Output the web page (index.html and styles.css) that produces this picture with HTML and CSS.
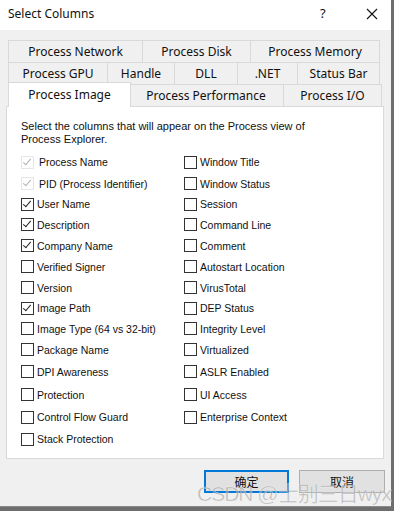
FILE: index.html
```html
<!DOCTYPE html>
<html>
<head>
<meta charset="utf-8">
<link rel="stylesheet" href="styles.css">
</head>
<body>
<div class="dialog">
  <div class="titlebar">
    <span class="title">Select Columns</span>
    <span class="help">?</span>
    <span class="close"><svg width="12" height="12" viewBox="0 0 12 12"><path d="M1 1L11 11M11 1L1 11" stroke="#111" stroke-width="1.1" fill="none"/></svg></span>
  </div>
  <div class="tabs">
    <div class="tabrow">
      <div class="tab w134">Process Network</div>
      <div class="tab w108">Process Disk</div>
      <div class="tab w130">Process Memory</div>
    </div>
    <div class="tabrow">
      <div class="tab w99">Process GPU</div>
      <div class="tab w67">Handle</div>
      <div class="tab w63">DLL</div>
      <div class="tab w60">.NET</div>
      <div class="tab w83">Status Bar</div>
    </div>
    <div class="tabrow">
      <div class="tab w118 selected">Process Image</div>
      <div class="tab w156">Process Performance</div>
      <div class="tab w98">Process I/O</div>
    </div>
  </div>
  <div class="panel">
    <p class="intro">Select the columns that will appear on the Process view of<br>Process Explorer.</p>
    <div class="grid">
      <label class="item disabled"><span class="box checked"></span>Process Name</label>
      <label class="item"><span class="box"></span>Window Title</label>
      <label class="item disabled"><span class="box checked"></span>PID (Process Identifier)</label>
      <label class="item"><span class="box"></span>Window Status</label>
      <label class="item"><span class="box checked"></span>User Name</label>
      <label class="item"><span class="box"></span>Session</label>
      <label class="item"><span class="box checked"></span>Description</label>
      <label class="item"><span class="box"></span>Command Line</label>
      <label class="item"><span class="box checked"></span>Company Name</label>
      <label class="item"><span class="box"></span>Comment</label>
      <label class="item"><span class="box"></span>Verified Signer</label>
      <label class="item"><span class="box"></span>Autostart Location</label>
      <label class="item"><span class="box"></span>Version</label>
      <label class="item"><span class="box"></span>VirusTotal</label>
      <label class="item"><span class="box checked"></span>Image Path</label>
      <label class="item"><span class="box"></span>DEP Status</label>
      <label class="item"><span class="box"></span>Image Type (64 vs 32-bit)</label>
      <label class="item"><span class="box"></span>Integrity Level</label>
      <label class="item"><span class="box"></span>Package Name</label>
      <label class="item"><span class="box"></span>Virtualized</label>
      <label class="item"><span class="box"></span>DPI Awareness</label>
      <label class="item"><span class="box"></span>ASLR Enabled</label>
      <label class="item"><span class="box"></span>Protection</label>
      <label class="item"><span class="box"></span>UI Access</label>
      <label class="item"><span class="box"></span>Control Flow Guard</label>
      <label class="item"><span class="box"></span>Enterprise Context</label>
      <label class="item"><span class="box"></span>Stack Protection</label>
    </div>
  </div>
  <div class="buttons">
    <button class="btn default">确定</button>
    <button class="btn">取消</button>
  </div>
  <div class="watermark">CSDN @士别三日wyx</div>
</div>
</body>
</html>
```
FILE: styles.css
```css
html, body {
  margin: 0;
  padding: 0;
}
body {
  background: #6e6e6e;
  width: 394px;
  height: 511px;
  overflow: hidden;
  font-family: "Liberation Sans", Arial, sans-serif;
}
.dialog {
  position: relative;
  width: 391px;
  height: 506px;
  background: #f0f0f0;
  border-bottom: 1px solid #8a8a8a;
  display: flex;
  flex-direction: column;
}
.titlebar {
  height: 30px;
  background: #ffffff;
  display: flex;
  align-items: center;
  padding-left: 8px;
  font-family: "Noto Sans", sans-serif;
  font-size: 12px;
  color: #111;
}
.title {
  flex: 1;
  margin-top: -3px;
}
.help {
  width: 46px;
  font-size: 13px;
  margin-top: -4px;
}
.close {
  width: 25px;
  display: flex;
  margin-top: -3px;
}
.tabs {
  margin-top: 10px;
  display: flex;
  flex-direction: column;
  font-family: "Noto Sans", sans-serif;
  font-size: 12px;
  color: #111;
}
.tabrow {
  display: flex;
  height: 22px;
  padding-left: 8px;
}
.tab {
  box-sizing: border-box;
  height: 22px;
  border: 1px solid #d9d9d9;
  border-bottom: none;
  margin-left: -1px;
  display: flex;
  align-items: center;
  justify-content: center;
  background: #f0f0f0;
  white-space: nowrap;
}
.tabrow .tab:first-child { margin-left: 0; }
.tab.selected {
  background: #ffffff;
  height: 25px;
  margin: -2px -2px 0 -2px;
  width: 123px;
  position: relative;
  z-index: 2;
  padding-bottom: 2px;
}
.w134 { width: 135px; }
.w108 { width: 109px; }
.w130 { width: 130px; }
.w99 { width: 100px; }
.w67 { width: 68px; }
.w63 { width: 64px; }
.w60 { width: 61px; }
.w83 { width: 83px; }
.w118 { width: 119px; }
.w156 { width: 156px; }
.w98 { width: 99px; }
.panel {
  box-sizing: border-box;
  margin-left: 6px;
  width: 378px;
  height: 353px;
  background: #ffffff;
  border: 1px solid #d9d9d9;
  padding: 13px 0 0 14px;
  position: relative;
  z-index: 1;
}
.intro {
  margin: 0;
  font-size: 11px;
  line-height: 13px;
  color: #111;
}
.grid {
  margin-top: 5px;
  display: grid;
  grid-template-columns: 163px 1fr;
  grid-template-rows: 22px 21px 20px 21px 21px 21px 21px 20px 21px 21px 23px 23px 22px 22px;
}
.item {
  display: flex;
  align-items: center;
  font-size: 10.5px;
  color: #111;
  white-space: nowrap;
}
.box {
  box-sizing: border-box;
  width: 13px;
  height: 13px;
  border: 1px solid #333;
  background: #fff;
  margin-right: 3px;
  flex: none;
  position: relative;
}
.box.checked::after {
  content: "";
  position: absolute;
  left: 3px;
  top: 0px;
  width: 3px;
  height: 7px;
  border: solid #222;
  border-width: 0 1px 1px 0;
  transform: rotate(40deg);
}
.item.disabled .box {
  border-color: #e6e6e6;
  margin-right: 5px;
}
.item.disabled .box.checked::after {
  border-color: #b0b0b0;
}
.buttons {
  display: flex;
  gap: 10px;
  margin-top: 11px;
  padding-left: 204px;
}
.btn {
  box-sizing: border-box;
  width: 86px;
  height: 23px;
  background: #e1e1e1;
  border: 1px solid #adadad;
  font-family: "Noto Sans CJK SC", sans-serif;
  font-size: 12px;
  color: #111;
  padding: 0;
  margin: 0;
}
.btn.default {
  width: 85px;
  border: 2px solid #0078d7;
}
.watermark {
  position: absolute;
  left: 197px;
  top: 477px;
  font-family: "Liberation Sans", "Noto Sans CJK SC", sans-serif;
  font-size: 21px;
  letter-spacing: -1px;
  color: rgba(150, 150, 150, 0.6);
  -webkit-text-stroke: 0.5px rgba(255,255,255,0.6);
  white-space: nowrap;
}
```
